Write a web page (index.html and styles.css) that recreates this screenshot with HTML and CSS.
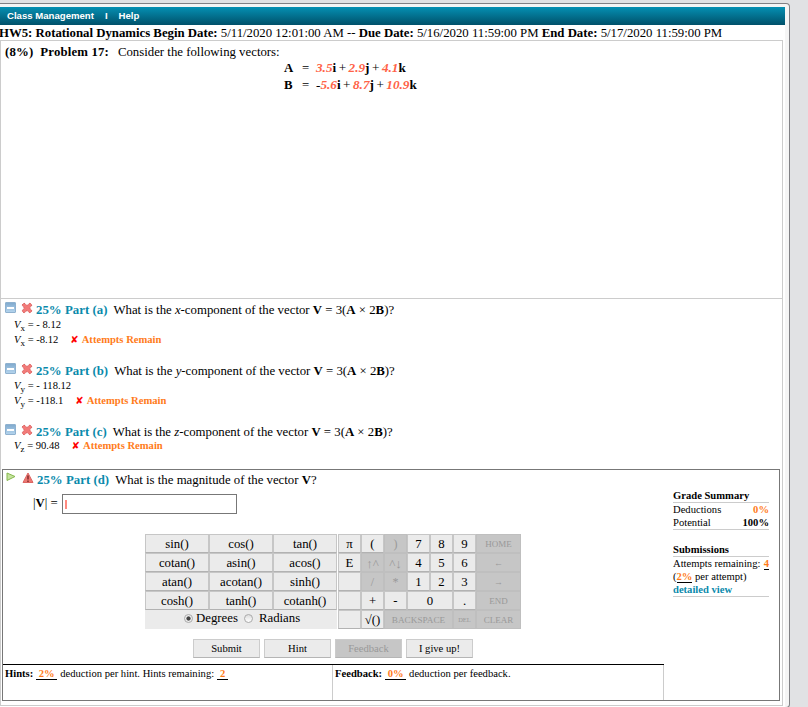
FILE: index.html
```html
<!DOCTYPE html>
<html>
<head>
    <meta charset="utf-8">
    <title>Rotational Dynamics</title>
    <link rel="stylesheet" href="styles.css">
</head>
<body>
<svg width="0" height="0" class="defs">
    <defs>
        <linearGradient id="blue" x1="0" y1="0" x2="0" y2="1">
            <stop offset="0" stop-color="#7fa9cd"/>
            <stop offset="1" stop-color="#b5d5ee"/>
        </linearGradient>
        <symbol id="minus" viewBox="0 0 11 11">
            <rect x=".5" y=".5" width="10" height="10" rx=".5" fill="url(#blue)" stroke="#8fb1cf"/>
            <rect x="2" y="5" width="7" height="2" fill="#fff"/>
        </symbol>
        <symbol id="cross" viewBox="0 0 12 12">
            <path d="M3 1 6 3.6 9 1 11 3 8.6 6 11 9 9 11 6 8.4 3 11 1 9 3.4 6 1 3Z" fill="#f27a78" stroke="#d9605f" stroke-dasharray="1.5 .6"/>
        </symbol>
    </defs>
</svg>
<div class="window">
    <div class="menu"><span>Class Management</span><span>I</span><span>Help</span></div>
    <div class="page">
        <div class="assignment"><b>HW5: Rotational Dynamics Begin Date:</b> 5/11/2020 12:01:00 AM -- <b>Due Date:</b> 5/16/2020 11:59:00 PM <b>End Date:</b> 5/17/2020 11:59:00 PM</div>
        <div class="problem">
            <div class="statement">
                <div class="intro"><b>(8%)</b><b>Problem 17:</b><span>Consider the following vectors:</span></div>
                <div class="vector"><b>A</b><span>=</span><div><i>3.5</i><b>i</b> + <i>2.9</i><b>j</b> + <i>4.1</i><b>k</b></div></div>
                <div class="vector"><b>B</b><span>=</span><div><em>-</em><i>5.6</i><b>i</b> + <i>8.7</i><b>j</b> + <i>10.9</i><b>k</b></div></div>
            </div>

            <div class="part">
                <div class="question"><svg class="minus"><use href="#minus"/></svg><svg class="cross"><use href="#cross"/></svg><b class="label">25% Part (a)</b><span>What is the <i>x</i>-component of the vector <b>V</b> = 3(<b>A</b> × 2<b>B</b>)?</span></div>
                <div class="answer"><i>V</i><sub>x</sub> = - 8.12</div>
                <div class="answer"><i>V</i><sub>x</sub> = -8.12<span class="remain"><b>✘</b>Attempts Remain</span></div>
            </div>
            <div class="part">
                <div class="question"><svg class="minus"><use href="#minus"/></svg><svg class="cross"><use href="#cross"/></svg><b class="label">25% Part (b)</b><span>What is the <i>y</i>-component of the vector <b>V</b> = 3(<b>A</b> × 2<b>B</b>)?</span></div>
                <div class="answer"><i>V</i><sub>y</sub> = - 118.12</div>
                <div class="answer"><i>V</i><sub>y</sub> = -118.1<span class="remain"><b>✘</b>Attempts Remain</span></div>
            </div>
            <div class="part part-c">
                <div class="question"><svg class="minus"><use href="#minus"/></svg><svg class="cross"><use href="#cross"/></svg><b class="label">25% Part (c)</b><span>What is the <i>z</i>-component of the vector <b>V</b> = 3(<b>A</b> × 2<b>B</b>)?</span></div>
                <div class="answer"><i>V</i><sub>z</sub> = 90.48<span class="remain"><b>✘</b>Attempts Remain</span></div>
            </div>

            <div class="current">
                <div class="work">
                    <div class="question">
                        <svg class="play" viewBox="0 0 10 10"><path d="M1 1 9 4.5 1 8.5Z" fill="#c5e39e" stroke="#86b84d" stroke-linejoin="round"/></svg>
                        <svg class="warn" viewBox="0 0 12 12"><path d="M6 1 11 10.5H1Z" fill="#ed7772" stroke="#dc6663" stroke-linejoin="round"/><path d="M6 3.5V7.5M6 8.5V10" stroke="#7d2927" stroke-width="1.4"/></svg>
                        <b class="label">25% Part (d)</b><span>What is the magnitude of the vector <b>V</b>?</span>
                    </div>
                    <div class="entry"><span>|<b>V</b>| =</span><div class="field"></div></div>
                    <div class="keypad">
                        <div class="functions">
                            <div>sin()</div><div>cos()</div><div>tan()</div>
                            <div>cotan()</div><div>asin()</div><div>acos()</div>
                            <div>atan()</div><div>acotan()</div><div>sinh()</div>
                            <div>cosh()</div><div>tanh()</div><div>cotanh()</div>
                            <div class="units"><span class="radio on"></span><span>Degrees</span><span class="radio"></span><span class="radians">Radians</span></div>
                        </div>
                        <div class="numbers">
                            <div>π</div><div>(</div><div class="off slash">)</div><div>7</div><div>8</div><div>9</div><div class="off">HOME</div>
                            <div>E</div><div class="off arrows">↑^</div><div class="off arrows">^↓</div><div>4</div><div>5</div><div>6</div><div class="off">←</div>
                            <div></div><div class="off slash">/</div><div class="off slash">*</div><div>1</div><div>2</div><div>3</div><div class="off">→</div>
                            <div></div><div>+</div><div>-</div><div class="zero">0</div><div>.</div><div class="off">END</div>
                            <div></div><div class="root">√()</div><div class="off back">BACKSPACE</div><div class="off del">DEL</div><div class="off">CLEAR</div>
                        </div>
                    </div>
                    <div class="buttons"><div>Submit</div><div>Hint</div><div class="off">Feedback</div><div>I give up!</div></div>
                    <div class="help">
                        <div><b>Hints:</b><b class="num">2%</b><span>deduction per hint. Hints remaining:</span><b class="num small">2</b></div>
                        <div><b>Feedback:</b><b class="num">0%</b><span>deduction per feedback.</span></div>
                    </div>
                </div>
                <div class="grade">
                    <div class="heading">Grade Summary</div>
                    <div class="row"><span>Deductions</span><b class="orange">0%</b></div>
                    <div class="row last"><span>Potential</span><b>100%</b></div>
                    <div class="heading submissions">Submissions</div>
                    <div class="row"><span>Attempts remaining:</span><b class="orange under">4</b></div>
                    <div class="row"><span>(<b class="orange under">2%</b> per attempt)</span></div>
                    <div class="row last"><b class="detail">detailed view</b></div>
                </div>
            </div>
        </div>
    </div>
</div>
</body>
</html>
```
FILE: styles.css
```css
* {
    box-sizing: border-box;
}

body {
    margin: 0;
    padding-top: 3px;
    height: 707px;
    overflow: hidden;
    background: #e1e2e4;
    color: #000;
    font-family: "Liberation Serif", "Times New Roman", serif;
    font-size: 12.8px;
    white-space: nowrap;
}

.defs {
    position: absolute;
}

.window {
    width: 790px;
    height: 705px;
    padding: 3px 4px 0 0;
    background: #f5f5f5;
    border: 1px solid #808084;
    border-left: 0;
    border-radius: 0 4px 4px 0;
}

.menu {
    display: flex;
    gap: 11px;
    height: 18px;
    padding-left: 7px;
    background: linear-gradient(#0590b3, #00516a);
    color: #fff;
    font: bold 9.6px/18px "Liberation Sans", Arial, sans-serif;
}

.page {
    height: 682px;
    background: #fff;
}

.assignment {
    height: 15px;
    margin-left: -1px;
    line-height: 17px;
    letter-spacing: -.01px;
}

.problem {
    width: 783px;
    height: 666px;
    border: 1px solid #ccc;
}

.statement {
    height: 258px;
    border-bottom: 1px solid #ccc;
}

.intro {
    display: flex;
    height: 18px;
    padding: 2px 0 0 4px;
    line-height: 18px;
}

.intro b {
    margin-right: 7px;
    letter-spacing: .15px;
}

.intro b + b {
    margin-right: 9px;
}

.vector {
    display: flex;
    height: 17px;
    padding-left: 283px;
    line-height: 18px;
}

.vector > b {
    width: 18px;
}

.vector > span {
    width: 14px;
}

.vector div {
    font-size: 13.2px;
    word-spacing: -.8px;
}

.vector i {
    color: #ff6347;
    font-weight: bold;
}

.vector em {
    font-style: normal;
}

.part {
    height: 61px;
    padding-top: 3px;
}

.part-c {
    height: 47px;
}

.part-c .answer {
    margin-top: -1px;
}

.question {
    display: flex;
    height: 16px;
    line-height: 16px;
}

.minus {
    width: 11px;
    height: 11px;
    margin-left: 4px;
}

.cross {
    width: 12px;
    height: 12px;
    margin: 0 3px 0 5px;
}

.label {
    margin-right: 6px;
    color: #0a8aac;
    letter-spacing: .03px;
}

.answer {
    height: 15px;
    padding-left: 13px;
    font-size: 10.6px;
    line-height: 14px;
}

sub {
    font-size: 9px;
    line-height: 0;
}

.remain {
    margin-left: 12px;
    color: #ff7b1a;
    font-weight: bold;
}

.remain b {
    margin-right: 3px;
    color: #f00;
    font-family: "DejaVu Sans", sans-serif;
    font-size: 10px;
}

.current {
    display: flex;
    width: 778px;
    height: 232px;
    margin: 1px 0 0 1px;
    border: 1px solid #777;
}

.work {
    width: 661px;
}

.current .question {
    padding-top: 2px;
    height: 18px;
}

.play {
    width: 10px;
    height: 10px;
    margin-left: 3px;
}

.warn {
    width: 12px;
    height: 12px;
    margin: 0 3px 0 6px;
}

.entry {
    display: flex;
    height: 26px;
    padding: 6px 0 0 30px;
    line-height: 19px;
}

.entry span {
    width: 29px;
}

.field {
    width: 175px;
    height: 20px;
    padding: 5px 2px;
    border: 1px solid #777;
}

.field::before {
    content: "";
    display: block;
    width: 2px;
    height: 9px;
    background: #ff8a80;
}

.keypad {
    display: flex;
    gap: 1px;
    height: 95px;
    margin: 20px 0 0 142px;
    line-height: 18px;
    text-align: center;
}

.functions,
.numbers {
    display: grid;
    grid-template-columns: repeat(3, 64px);
    grid-auto-rows: 19px;
    background: #ebebeb;
}

.numbers {
    grid-template-columns: repeat(6, 23px) 45px;
}

.functions > div,
.numbers > div {
    border: 1px solid #c6c6c6;
    border-bottom-color: #b2b2b2;
    background: #ebebeb;
}

.functions .units {
    display: flex;
    grid-column: span 3;
    padding-left: 38px;
    border: 0;
    line-height: 17px;
}

.radio {
    width: 9px;
    height: 9px;
    margin: 4px 3px 0 1px;
    border: 1px solid #aaa;
    border-radius: 50%;
    background: linear-gradient(#ddd, #fff);
}

.radio + .radians {
    margin-left: 3px;
}

span + .radio {
    margin-left: 6px;
}

.on {
    background: radial-gradient(circle, #444 0 35%, #eee 50%);
}

.numbers .off {
    background: #c6c6c6;
    border-color: #bfbfbf;
    color: #999;
    font-size: 9px;
}

.numbers .slash {
    font-size: 12px;
}

.numbers .arrows {
    font-size: 13px;
    line-height: 20px;
}

.zero {
    grid-column: span 2;
}

.numbers .back {
    grid-column: span 3;
    font-size: 9.2px;
}

.numbers .del {
    font-size: 6.5px;
}

.buttons {
    display: flex;
    gap: 4px;
    height: 19px;
    margin: 10px 0 0 190px;
    font-size: 10.6px;
    line-height: 17px;
    text-align: center;
}

.buttons div {
    width: 67px;
    border: 1px solid #ccc;
    border-bottom-color: #b5b5b5;
    background: #ebebeb;
}

.buttons .off {
    background: #c6c6c6;
    color: #999;
}

.help {
    display: flex;
    height: 36px;
    margin-top: 6px;
    border-top: 1px solid #000;
    font-size: 10.6px;
    line-height: 15px;
}

.help > div {
    display: flex;
    width: 330px;
    height: 35px;
    padding: 1px 0 0 2px;
    border-right: 1px solid #ccc;
}

.help > div + div {
    width: 331px;
}

.num {
    width: 21px;
    height: 14px;
    margin: 0 3px;
    border-bottom: 1px solid #000;
    color: #ff7b1a;
    text-align: center;
}

.num.small {
    width: 11px;
}

.grade {
    width: 96px;
    margin: 19px 0 0 9px;
    font-size: 10.6px;
    line-height: 13px;
}

.heading {
    height: 14px;
    border-bottom: 1px solid #ccc;
    font-weight: bold;
}

.row {
    display: flex;
    justify-content: space-between;
    height: 13px;
}

.row.last {
    height: 14px;
    border-bottom: 1px solid #ccc;
}

.submissions {
    margin-top: 13px;
}

.orange {
    color: #ff7b1a;
}

.under {
    height: 13px;
    border-bottom: 1px solid #000;
}

.detail {
    color: #0a8aac;
}
```
